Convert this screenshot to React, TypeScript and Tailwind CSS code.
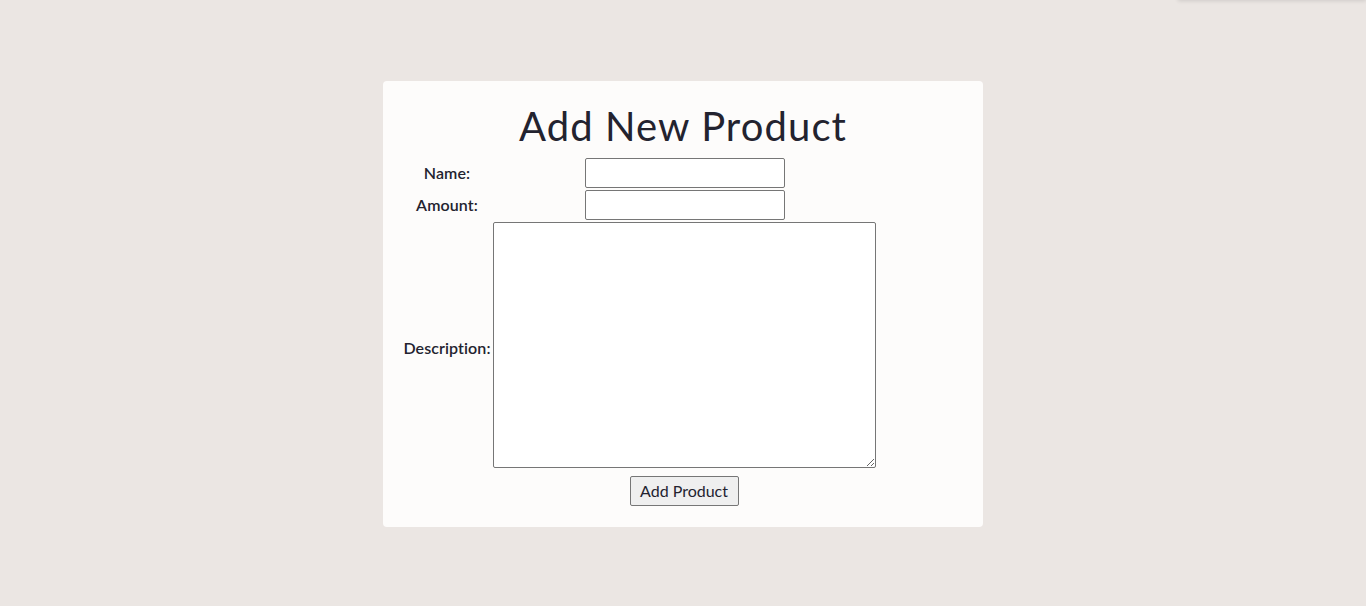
import { useState } from 'react';

export default function App() {
    const [name, setName] = useState('');
    const [amount, setAmount] = useState('');
    const [description, setDescription] = useState('');

    return (
        <div className="relative min-h-[606px] w-full bg-[#ebe6e3] pt-[81px] font-['Lato',sans-serif] text-[#23232f] overflow-hidden">
            {/* stray shadow of a menu above the viewport */}
            <div className="absolute right-0 top-[-40px] w-[188px] h-[40px] bg-[#ebe6e3] shadow-[0_1px_4px_rgba(0,0,0,0.12)]"></div>

            <div className="mx-auto w-[600px] h-[446px] bg-[#fdfcfb] rounded-[4px] pt-[20px]">
                <h1 className="text-center text-[40px] leading-[50px] font-normal text-[#23232f] tracking-[1.1px]">
                    Add New Product
                </h1>

                <form className="mt-[7px]" onSubmit={(e) => e.preventDefault()}>
                    <div className="ml-[20px] grid grid-cols-[88px_383px] gap-x-[2px] gap-y-[2px] items-center">
                        <label className="text-center text-[16px] font-semibold tracking-[0.1px]">Name:</label>
                        <div className="flex justify-center">
                            <input
                                type="text"
                                value={name}
                                onChange={(e) => setName(e.target.value)}
                                className="w-[200px] h-[30px] bg-white border border-[#767676] rounded-[2px] px-1 text-[14px] outline-none"
                            />
                        </div>

                        <label className="text-center text-[16px] font-semibold tracking-[0.1px]">Amount:</label>
                        <div className="flex justify-center">
                            <input
                                type="text"
                                value={amount}
                                onChange={(e) => setAmount(e.target.value)}
                                className="w-[200px] h-[30px] bg-white border border-[#767676] rounded-[2px] px-1 text-[14px] outline-none"
                            />
                        </div>

                        <label className="pt-[6px] text-center text-[16px] font-semibold whitespace-nowrap tracking-[0.1px]">Description:</label>
                        <textarea
                            value={description}
                            onChange={(e) => setDescription(e.target.value)}
                            className="block w-[383px] h-[246px] bg-white border border-[#767676] rounded-[2px] p-1 text-[14px] outline-none resize"
                        ></textarea>
                    </div>

                    <div className="flex justify-center mt-[8px] pl-[2px]">
                        <button
                            type="submit"
                            className="w-[109px] h-[30px] bg-[#efefef] border border-[#767676] rounded-[2px] text-[16px] text-[#23232f] hover:bg-[#e5e5e5]"
                        >
                            Add Product
                        </button>
                    </div>
                </form>
            </div>
        </div>
    );
}
